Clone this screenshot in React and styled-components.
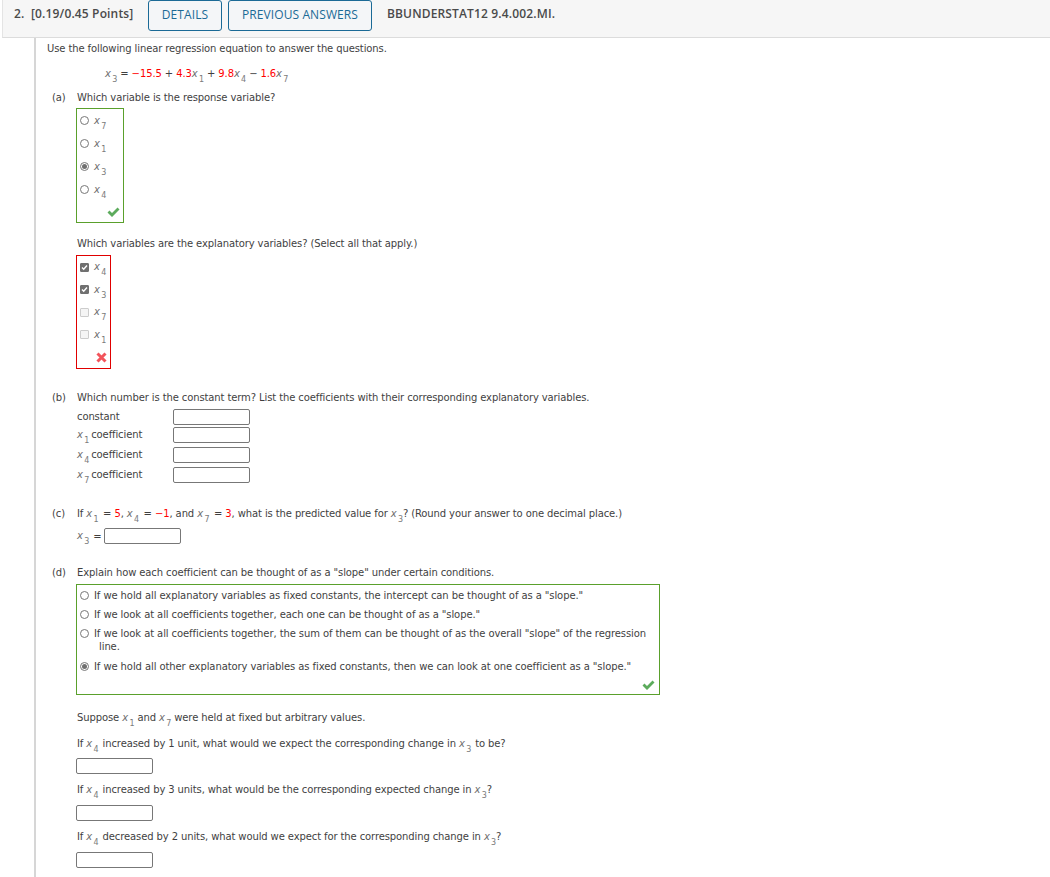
import React from "react";
import styled, { createGlobalStyle } from "styled-components";

const Global = createGlobalStyle`
  html, body { margin: 0; padding: 0; background: #fff; }
  body { font-family: "DejaVu Sans", Verdana, sans-serif; font-size: 10px; letter-spacing: -0.11px; color: #3f3f3f; }
`;
const Page = styled.div`width: 1050px; height: 877px; overflow: hidden; background: #fff;`;
const Header = styled.header`
  height: 37px; margin-left: 2px; display: flex; align-items: flex-start;
  background: #f6f6f6; border-bottom: 1px solid #dcdcdc; border-left: 1px solid #e4e4e4;
  font-family: "Open Sans", sans-serif; font-size: 12px; font-weight: 600; letter-spacing: 0.15px; color: #4a4a4a;
`;
const QTitle = styled.div`margin-left: 11px; width: 134px; height: 31px; line-height: 28px; white-space: pre;`;
const HeadButton = styled.div`
  height: 31px; box-sizing: border-box; width: ${p => p.$w}px; margin-right: 6px; padding-bottom: 2px;
  display: flex; align-items: center; justify-content: center;
  border: 1px solid #1b6a96; border-radius: 3px; background: #f4f6f8;
  color: #1b6a96; font-weight: 400; font-size: 12px; letter-spacing: 0.1px;
`;
const Code = styled.div`margin-left: 9px; height: 31px; line-height: 28px;`;
const Main = styled.main`
  margin-left: 34px; height: 840px; padding: 4px 0 0 11px; border-left: 2px solid #d6d6d6;
`;
const Text = styled.div`
  height: 14px; line-height: 14px; white-space: nowrap; margin-top: ${p => p.$mt || 0}px;
  margin-left: ${p => p.$ml || 0}px; display: flex;
`;
const Part = styled.span`width: 25px; margin-left: 5px; flex: none;`;
const Inline = styled.span`white-space: pre;`;
const Red = styled.span`color: #f00;`;
const VarWrap = styled.span`color: #6e6e6e; font-style: italic; white-space: nowrap; margin: 0 ${p => p.$gap ?? 0}px 0 0;`;
const Sub = styled.sub`font-style: normal; font-size: 8px; line-height: 0; vertical-align: -5px; margin-left: 1.4px; color: #7a7a7a;`;
const X = ({ n, gap }) => <VarWrap $gap={gap}>x<Sub>{n}</Sub></VarWrap>;
const AnswerBox = styled.div`
  box-sizing: border-box; margin-top: ${p => p.$mt}px; margin-left: 29px;
  width: ${p => p.$w}px; height: ${p => p.$h}px; padding-top: ${p => p.$pt || 0}px;
  border: 1px solid ${p => (p.$bad ? "#e00000" : "#5aa02c")};
  display: flex; flex-direction: column;
`;
const Option = styled.div`
  height: ${p => p.$h}px; flex: none; display: flex; align-items: ${p => (p.$top ? "flex-start" : "center")}; gap: 5px; padding-left: 3px;
  white-space: nowrap; letter-spacing: -0.09px;
`;
const Radio = styled.span`
  width: 7px; height: 7px; flex: none; border-radius: 50%; border: 1px solid #777; background: #fff;
  position: relative; margin-top: ${p => p.$mt || 0}px;
  ${p => p.$on && `&::after{content:"";position:absolute;left:1px;top:1px;width:5px;height:5px;border-radius:50%;background:#707070;}`}
`;
const CheckBoxMark = styled.span`
  width: 9px; height: 9px; flex: none; box-sizing: border-box; border-radius: 1px;
  border: 1px solid ${p => (p.$on ? "#707070" : "#ccc")}; background: ${p => (p.$on ? "#707070" : "#f5f5f5")};
  display: flex; align-items: center; justify-content: center;
`;
const MarkRow = styled.div`
  flex: 1; display: flex; justify-content: flex-end; align-items: center; padding-right: ${p => p.$pr}px;
`;
const Field = styled.span`
  display: block; box-sizing: border-box; width: ${p => p.$w || 77}px; height: 16px; flex: none;
  border: 1px solid #777; border-radius: 2px; background: #fff;
  margin-top: ${p => p.$mt || 0}px; margin-left: ${p => p.$ml ?? 0}px;
`;
const CoefRow = styled.div`
  display: grid; grid-template-columns: 96px 77px; margin-left: 30px; height: 16px; align-items: center;
  margin-top: ${p => p.$mt}px; white-space: nowrap;
`;
const CoefLabel = styled.span`padding-bottom: ${p => p.$pb ?? 0}px;`;
const PredictRow = styled.div`
  display: flex; align-items: center; gap: 3px; height: 16px; margin: 7px 0 0 30px; white-space: nowrap;
`;
const Wrapped = styled.div`line-height: 13px; white-space: normal; width: 560px; text-indent: -5px; padding: 3px 0 0 5px; box-sizing: border-box;`;

const Check = () => (
  <svg width="13" height="10" viewBox="0 0 13 10"><path d="M0.5 5.5L2.5 3.5L5 6L10.5 0.5L12.5 2.5L5 10z" fill="#5cab5c" /></svg>
);
const Cross = () => (
  <svg width="11" height="11" viewBox="0 0 11 11"><path d="M1.5 1.5l8 8M9.5 1.5l-8 8" stroke="#f2545b" strokeWidth="3" /></svg>
);
const Tick = () => (
  <svg width="7" height="7" viewBox="0 0 7 7"><path d="M1 3.5l1.7 1.7L6 1.5" stroke="#fff" strokeWidth="1.4" fill="none" /></svg>
);

const Opt = ({ n, on }) => <Option $h={23}><Radio $on={on} /><X n={n} /></Option>;
const Chk = ({ n, on, h }) => <Option $h={h}><CheckBoxMark $on={on}>{on && <Tick />}</CheckBoxMark><X n={n} /></Option>;
const Long = ({ on, h, children }) => <Option $h={h}><Radio $on={on} />{children}</Option>;

export default function App() {
  return (
    <Page>
      <Global />
      <Header>
        <QTitle>2.  [0.19/0.45 Points]</QTitle>
        <HeadButton $w={74}>DETAILS</HeadButton>
        <HeadButton $w={144}>PREVIOUS ANSWERS</HeadButton>
        <Code>BBUNDERSTAT12 9.4.002.MI.</Code>
      </Header>
      <Main>
        <Text>Use the following linear regression equation to answer the questions.</Text>
        <Text $mt={11} $ml={58}>
          <Inline><X n={3} /> = <Red>−15.5</Red> + <Red>4.3</Red><X n={1} /> + <Red>9.8</Red><X n={4} /> − <Red>1.6</Red><X n={7} /></Inline>
        </Text>
        <Text $mt={10}><Part>(a)</Part>Which variable is the response variable?</Text>
        <AnswerBox $mt={3} $w={48} $h={115}>
          <Opt n={7} /><Opt n={1} /><Opt n={3} on /><Opt n={4} />
          <MarkRow $pr={3}><Check /></MarkRow>
        </AnswerBox>
        <Text $mt={14} $ml={30}>Which variables are the explanatory variables? (Select all that apply.)</Text>
        <AnswerBox $mt={4} $w={35} $h={114} $bad>
          <Chk n={4} on h={22} /><Chk n={3} on h={23} /><Chk n={7} h={22} /><Chk n={1} h={23} />
          <MarkRow $pr={3}><Cross /></MarkRow>
        </AnswerBox>
        <Text $mt={22}><Part>(b)</Part>Which number is the constant term? List the coefficients with their corresponding explanatory variables.</Text>
        <CoefRow $mt={4}><CoefLabel $pb={2}>constant</CoefLabel><Field /></CoefRow>
        <CoefRow $mt={2}><CoefLabel><X n={1} gap={2} />coefficient</CoefLabel><Field /></CoefRow>
        <CoefRow $mt={4}><CoefLabel><X n={4} gap={2} />coefficient</CoefLabel><Field /></CoefRow>
        <CoefRow $mt={4}><CoefLabel><X n={7} gap={2} />coefficient</CoefLabel><Field /></CoefRow>
        <Text $mt={24}>
          <Part>(c)</Part>
          <Inline>If <X n={1} gap={1.5} /> = <Red>5</Red>, <X n={4} gap={1.5} /> = <Red>−1</Red>, and <X n={7} gap={1.5} /> = <Red>3</Red>, what is the predicted value for <X n={3} />? (Round your answer to one decimal place.)</Inline>
        </Text>
        <PredictRow><X n={3} gap={1} />=<Field /></PredictRow>
        <Text $mt={22}><Part>(d)</Part>Explain how each coefficient can be thought of as a "slope" under certain conditions.</Text>
        <AnswerBox $mt={4} $w={584} $h={111} $pt={1}>
          <Long h={19}>If we hold all explanatory variables as fixed constants, the intercept can be thought of as a "slope."</Long>
          <Long h={19}>If we look at all coefficients together, each one can be thought of as a "slope."</Long>
          <Option $h={33} $top><Radio $mt={5} /><Wrapped>If we look at all coefficients together, the sum of them can be thought of as the overall "slope" of the regression line.</Wrapped></Option>
          <Long on h={19}>If we hold all other explanatory variables as fixed constants, then we can look at one coefficient as a "slope."</Long>
          <MarkRow $pr={4}><Check /></MarkRow>
        </AnswerBox>
        <Text $mt={16} $ml={30}><Inline>Suppose <X n={1} gap={0} /> and <X n={7} gap={0} /> were held at fixed but arbitrary values.</Inline></Text>
        <Text $mt={12} $ml={30}><Inline>If <X n={4} gap={1} /> increased by 1 unit, what would we expect the corresponding change in <X n={3} gap={1} /> to be?</Inline></Text>
        <Field $mt={7} $ml={29} />
        <Text $mt={9} $ml={30}><Inline>If <X n={4} gap={1} /> increased by 3 units, what would be the corresponding expected change in <X n={3} />?</Inline></Text>
        <Field $mt={8} $ml={29} />
        <Text $mt={9} $ml={30}><Inline>If <X n={4} gap={1} /> decreased by 2 units, what would we expect for the corresponding change in <X n={3} />?</Inline></Text>
        <Field $mt={8} $ml={29} />
      </Main>
    </Page>
  );
}
